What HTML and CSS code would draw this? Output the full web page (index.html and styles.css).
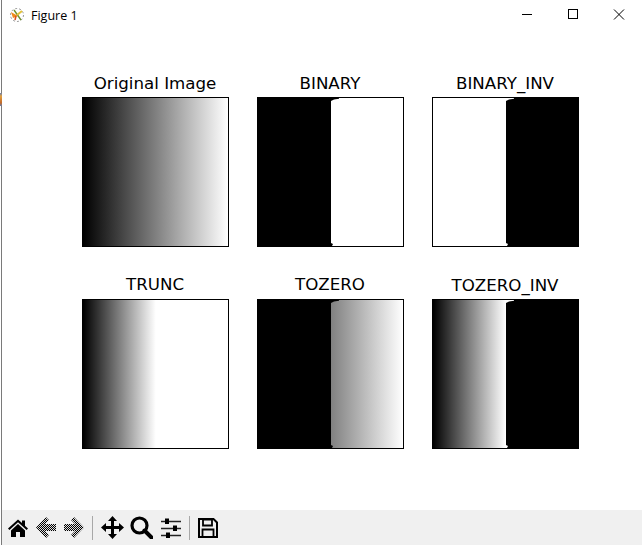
FILE: index.html
```html
<!DOCTYPE html>
<html lang="en">
<head>
<meta charset="utf-8">
<title>Figure 1</title>
<link rel="stylesheet" href="styles.css">
</head>
<body>
<svg class="defs" width="0" height="0" aria-hidden="true">
  <defs>
    <pattern id="dither" width="2" height="2" patternUnits="userSpaceOnUse">
      <rect width="2" height="2" fill="#ddd"/>
      <rect width="1" height="1" fill="#000"/>
      <rect x="1" y="1" width="1" height="1" fill="#000"/>
    </pattern>
    <symbol id="notch-black" viewBox="0 0 145 148">
      <polygon points="73,0 81,0 81,0.8 76,1.600 73,3" fill="#000"/>
      <polygon points="73,145 75,146 74,148 73,148" fill="#000"/>
    </symbol>
    <symbol id="notch-white" viewBox="0 0 145 148">
      <polygon points="73,0 81,0 81,0.8 76,1.600 73,3" fill="#fff"/>
      <polygon points="73,145 75,146 74,148 73,148" fill="#fff"/>
    </symbol>
  </defs>
</svg>
<span class="edge-mark"></span>
<div class="window">
  <header class="titlebar">
    <svg class="app-icon" width="16" height="16" viewBox="0 0 16 16">
      <circle cx="8" cy="8" r="6.5" fill="none" stroke="#999" stroke-dasharray="2 2"/>
      <path d="M2 5l7 4-5 2z" fill="#f08a1d"/>
      <path d="M5 3l7 10" stroke="#6f8f2a" stroke-width="1.4"/>
      <path d="M8 8l5-4" stroke="#e2c23a" stroke-width="2"/>
      <path d="M7 9l-1 4" stroke="#d9501e" stroke-width="1.5"/>
    </svg>
    <span class="window-title">Figure 1</span>
    <div class="controls">
      <svg class="ctl" width="46" height="30" viewBox="0 0 46 30"><path d="M18 14.5h10" stroke="#000"/></svg>
      <svg class="ctl" width="46" height="30" viewBox="0 0 46 30"><rect x="18.5" y="9.5" width="9" height="9" fill="none" stroke="#000"/></svg>
      <svg class="ctl" width="46" height="30" viewBox="0 0 46 30"><path d="M18 9.5l10 10M28 9.5l-10 10" stroke="#000"/></svg>
    </div>
  </header>

  <main class="figure">
    <section class="plot">
      <h2 class="plot-title">Original Image</h2>
      <div class="axes ramp-full"></div>
    </section>
    <section class="plot">
      <h2 class="plot-title">BINARY</h2>
      <div class="axes split-binary"><svg class="notch"><use href="#notch-black"/></svg></div>
    </section>
    <section class="plot">
      <h2 class="plot-title">BINARY_INV</h2>
      <div class="axes split-inv"><svg class="notch"><use href="#notch-white"/></svg></div>
    </section>
    <section class="plot">
      <h2 class="plot-title title-raised">TRUNC</h2>
      <div class="axes ramp-trunc"></div>
    </section>
    <section class="plot">
      <h2 class="plot-title title-raised">TOZERO</h2>
      <div class="axes ramp-tozero"><svg class="notch"><use href="#notch-black"/></svg></div>
    </section>
    <section class="plot">
      <h2 class="plot-title">TOZERO_INV</h2>
      <div class="axes ramp-tozero-inv"><svg class="notch"><use href="#notch-white"/></svg></div>
    </section>
  </main>

  <footer class="toolbar">
    <svg class="tool tool-home" width="20" height="18" viewBox="0 0 20 18">
      <path d="M10 0.5L0 9.5l1.4 1.4L10 3.2l8.6 7.7L20 9.5l-3-2.7V1.5h-3v2.6z" fill="#000"/>
      <path d="M3 11.5L10 5l7 6.5V18h-5v-5H8v5H3z" fill="#000"/>
    </svg>
    <svg class="tool tool-arrow" width="20" height="22" viewBox="0 0 20 22">
      <path d="M10 0L0 10.500 10 21l3-3-4-4h11V7H9l4-4z" fill="url(#dither)"/>
    </svg>
    <svg class="tool tool-arrow" width="20" height="22" viewBox="0 0 20 22">
      <path d="M10 0l10 10.500L10 21l-3-3 4-4H0V7h11L7 3z" fill="url(#dither)"/>
    </svg>
    <span class="sep"></span>
    <svg class="tool" width="23" height="23" viewBox="0 0 23 23">
      <path d="M11.5 0l4.5 5h-3v5h5V7l5 4.500-5 4.500v-3h-5v5h3l-4.500 5-4.500-5h3v-5H5v3L0 11.500 5 7v3h5V5H7z" fill="#000"/>
    </svg>
    <svg class="tool tool-zoom" width="23" height="23" viewBox="0 0 23 23">
      <circle cx="9.500" cy="9.500" r="7.500" fill="none" stroke="#000" stroke-width="3.200"/>
      <path d="M14.500 14.500l7 7" stroke="#000" stroke-width="4" stroke-linecap="round"/>
    </svg>
    <svg class="tool" width="20" height="20" viewBox="0 0 20 20">
      <path d="M0 3.500h20M0 10.500h20M0 17.500h20" stroke="#222" stroke-width="1.500"/>
      <rect x="4" y="0.500" width="4" height="5.500" fill="#000"/>
      <rect x="12" y="7.500" width="4" height="5.500" fill="#000"/>
      <rect x="5" y="14.500" width="4" height="5.500" fill="#000"/>
    </svg>
    <span class="sep"></span>
    <svg class="tool" width="20" height="20" viewBox="0 0 20 20">
      <path d="M1 1h14.500L19 4.500V19H1z" fill="none" stroke="#000" stroke-width="2"/>
      <path d="M5 1.500h9v6H5z" fill="none" stroke="#000" stroke-width="1.800"/>
      <path d="M4.500 18.500v-7h11v7" fill="none" stroke="#000" stroke-width="1.800"/>
    </svg>
  </footer>
</div>
</body>
</html>
```

FILE: styles.css
```css
* {
  box-sizing: border-box;
}

html,
body {
  margin: 0;
  height: 100%;
  background: #fff;
}

.defs {
  position: absolute;
}

.edge-mark {
  position: absolute;
  top: 93px;
  left: 0;
  width: 2px;
  height: 13px;
  background: linear-gradient(to bottom, #6d7fa8, #e0a040 25%, #c46a2a 75%, #6d7fa8);
}

.window {
  display: flex;
  flex-direction: column;
  width: 642px;
  height: 545px;
  margin-left: 1px;
  border-left: 1px solid #7a7a7a;
  overflow: hidden;
  background: #fff;
}

.titlebar {
  display: flex;
  align-items: center;
  flex: none;
  height: 30px;
  padding-left: 7px;
  font-family: "Noto Sans", "Liberation Sans", sans-serif;
  font-size: 12px;
  color: #000;
}

.app-icon {
  flex: none;
}

.window-title {
  margin-left: 6px;
  font-family: "Open Sans", "Noto Sans", sans-serif;
  font-size: 12.5px;
}

.controls {
  display: flex;
  margin-left: auto;
  margin-right: 1px;
}

.ctl {
  display: block;
}

.figure {
  display: grid;
  flex: 1;
  grid-template-columns: repeat(3, 147px);
  grid-auto-rows: 202px;
  column-gap: 28px;
  align-content: start;
  padding: 40px 0 0 80px;
}

.plot {
  display: flex;
  flex-direction: column;
}

.plot-title {
  height: 27px;
  margin: 0;
  padding-right: 1px;
  font-family: "DejaVu Sans", sans-serif;
  font-size: 16.67px;
  font-weight: 400;
  line-height: 27px;
  text-align: center;
  white-space: nowrap;
  color: #000;
}

.title-raised {
  line-height: 25px;
}

.axes {
  position: relative;
  width: 147px;
  height: 150px;
  border: 1px solid #000;
}

.notch {
  position: absolute;
  inset: 0;
  width: 100%;
  height: 100%;
}

.ramp-full {
  background: linear-gradient(to right, #000, #fff);
}

.split-binary {
  background: linear-gradient(to right, #000 50.2%, #fff 50.2%);
}

.split-inv {
  background: linear-gradient(to right, #fff 50.2%, #000 50.2%);
}

.ramp-trunc {
  background: linear-gradient(to right, #000, #fff 50.2%);
}

.ramp-tozero {
  background: linear-gradient(to right, #000 50.2%, #808080 50.2%, #fff);
}

.ramp-tozero-inv {
  background: linear-gradient(to right, #000, #fff 50.2%, #000 50.2%);
}

.toolbar {
  display: flex;
  align-items: center;
  flex: none;
  gap: 8px;
  height: 35px;
  padding-left: 6px;
  background: #f0f0f0;
}

.tool {
  display: block;
  flex: none;
}

.tool-zoom {
  margin-left: -2px;
}

.sep {
  flex: none;
  width: 1px;
  height: 24px;
  background: #a8a8a8;
}
```
